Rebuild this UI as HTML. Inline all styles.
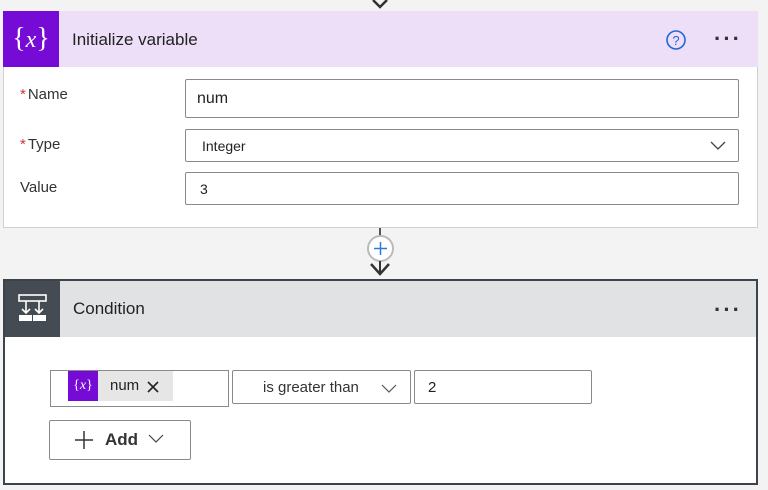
<!DOCTYPE html>
<html><head><style>
*{box-sizing:border-box;margin:0;padding:0}
body{width:768px;height:490px;background:#f3f3f3;font-family:"Liberation Sans",sans-serif;position:relative;overflow:hidden;color:#222}
.a{position:absolute}
.inp{position:absolute;background:#fff;border:1px solid #8a8a8a;border-radius:2px;font-size:15px;padding-left:11px;display:flex;align-items:center}
.lbl{position:absolute;font-size:14px;color:#333}
.lbl b{color:#d13438;font-weight:normal;margin-right:2px}
.dots{position:absolute;font-size:22px;letter-spacing:2px;color:#333;font-weight:bold}
</style></head><body>
<svg class="a" style="left:370px;top:0" width="20" height="10"><path d="M3 0 L10 7 L17 0" stroke="#333" stroke-width="2.5" fill="none"/></svg>
<div class="a" style="left:3px;top:11px;width:755px;height:217px;background:#fff;border:1px solid #d0d0d0"></div>
<div class="a" style="left:3px;top:11px;width:755px;height:56px;background:#ecdff7"></div>
<div class="a" style="left:3px;top:11px;width:56px;height:56px;background:#770bd6;color:#fff;font-family:'Liberation Serif',serif;font-size:28px;display:flex;align-items:center;justify-content:center"><span>{<i style="font-size:24px">x</i>}</span></div>
<div class="a" style="left:72px;top:30px;font-size:17px;color:#222">Initialize variable</div>
<svg class="a" style="left:665px;top:29px" width="22" height="22"><circle cx="11" cy="11" r="9" stroke="#2266d8" stroke-width="1.6" fill="none"/><text x="11" y="16" font-size="13" text-anchor="middle" fill="#2266d8" font-family="Liberation Sans">?</text></svg>
<div class="dots" style="left:714px;top:26px">···</div>
<div class="lbl" style="left:20px;top:86px;font-size:15px"><b>*</b>Name</div>
<div class="inp" style="left:185px;top:79px;width:554px;height:39px;font-size:16px">num</div>
<div class="lbl" style="left:20px;top:136px;font-size:15px"><b>*</b>Type</div>
<div class="inp" style="left:185px;top:129px;width:554px;height:33px;font-size:14px;padding-left:16px">Integer</div>
<svg class="a" style="left:709px;top:140px" width="18" height="12"><path d="M2 2 L9 9 L16 2" stroke="#444" stroke-width="1.3" fill="none"/></svg>
<div class="lbl" style="left:20px;top:179px;font-size:15px">Value</div>
<div class="inp" style="left:185px;top:172px;width:554px;height:33px;font-size:14px;padding-left:14px">3</div>
<div class="a" style="left:379px;top:228px;width:2px;height:9px;background:#555"></div>
<div class="a" style="left:367px;top:235px;width:27px;height:27px;border-radius:50%;border:2px solid #bbb;background:#fff"></div>
<svg class="a" style="left:371px;top:239px" width="19" height="19"><path d="M9.5 3V16M3 9.5H16" stroke="#2a7ae2" stroke-width="1.5"/></svg>
<svg class="a" style="left:368px;top:261px" width="24" height="18"><path d="M3 3 L12 13 L21 3" stroke="#333" stroke-width="2.5" fill="none"/><path d="M12 0V13" stroke="#333" stroke-width="2"/></svg>
<div class="a" style="left:3px;top:279px;width:755px;height:206px;background:#fff;border:2px solid #3d434a"></div>
<div class="a" style="left:5px;top:281px;width:751px;height:56px;background:#e1e2e4"></div>
<div class="a" style="left:5px;top:281px;width:55px;height:56px;background:#444b53"></div>
<svg class="a" style="left:16px;top:293px" width="34" height="34"><g stroke="#fff" stroke-width="1.6" fill="none"><rect x="3" y="2" width="27" height="6"/><path d="M10 8V20M6 16L10 20L14 16M23 8V20M19 16L23 20L27 16"/></g><rect x="3" y="22" width="13" height="6" fill="#fff"/><rect x="17" y="22" width="13" height="6" fill="#fff"/></svg>
<div class="a" style="left:73px;top:299px;font-size:17px;color:#222">Condition</div>
<div class="dots" style="left:714px;top:297px">···</div>
<div class="a" style="left:50px;top:370px;width:179px;height:37px;border:1px solid #8a8a8a;background:#fff"></div>
<div class="a" style="left:68px;top:371px;width:105px;height:30px;background:#e6e6e6"></div>
<div class="a" style="left:68px;top:371px;width:30px;height:30px;background:#770bd6;color:#fff;font-family:'Liberation Serif',serif;font-size:14px;display:flex;align-items:center;justify-content:center">{<i>x</i>}</div>
<div class="a" style="left:110px;top:377px;font-size:15px">num</div>
<svg class="a" style="left:146px;top:380px" width="14" height="14"><path d="M2 2L12 12M12 2L2 12" stroke="#222" stroke-width="1.6"/></svg>
<div class="inp" style="left:232px;top:370px;width:179px;height:34px;font-size:15px;padding-left:30px;color:#333">is greater than</div>
<svg class="a" style="left:380px;top:383px" width="18" height="12"><path d="M2 2L9 9L16 2" stroke="#555" stroke-width="1.2" fill="none"/></svg>
<div class="inp" style="left:414px;top:370px;width:178px;height:34px;font-size:15px;padding-left:13px">2</div>
<div class="a" style="left:49px;top:420px;width:142px;height:40px;border:1px solid #8a8a8a;border-radius:2px;background:#fff"></div>
<svg class="a" style="left:73px;top:429px" width="22" height="22"><path d="M11 2V20M2 11H20" stroke="#333" stroke-width="1.5"/></svg>
<div class="a" style="left:105px;top:430px;font-size:17px;font-weight:bold;color:#333">Add</div>
<svg class="a" style="left:148px;top:434px" width="16" height="10"><path d="M1 1L8 8L15 1" stroke="#444" stroke-width="1.2" fill="none"/></svg>
</body></html>
